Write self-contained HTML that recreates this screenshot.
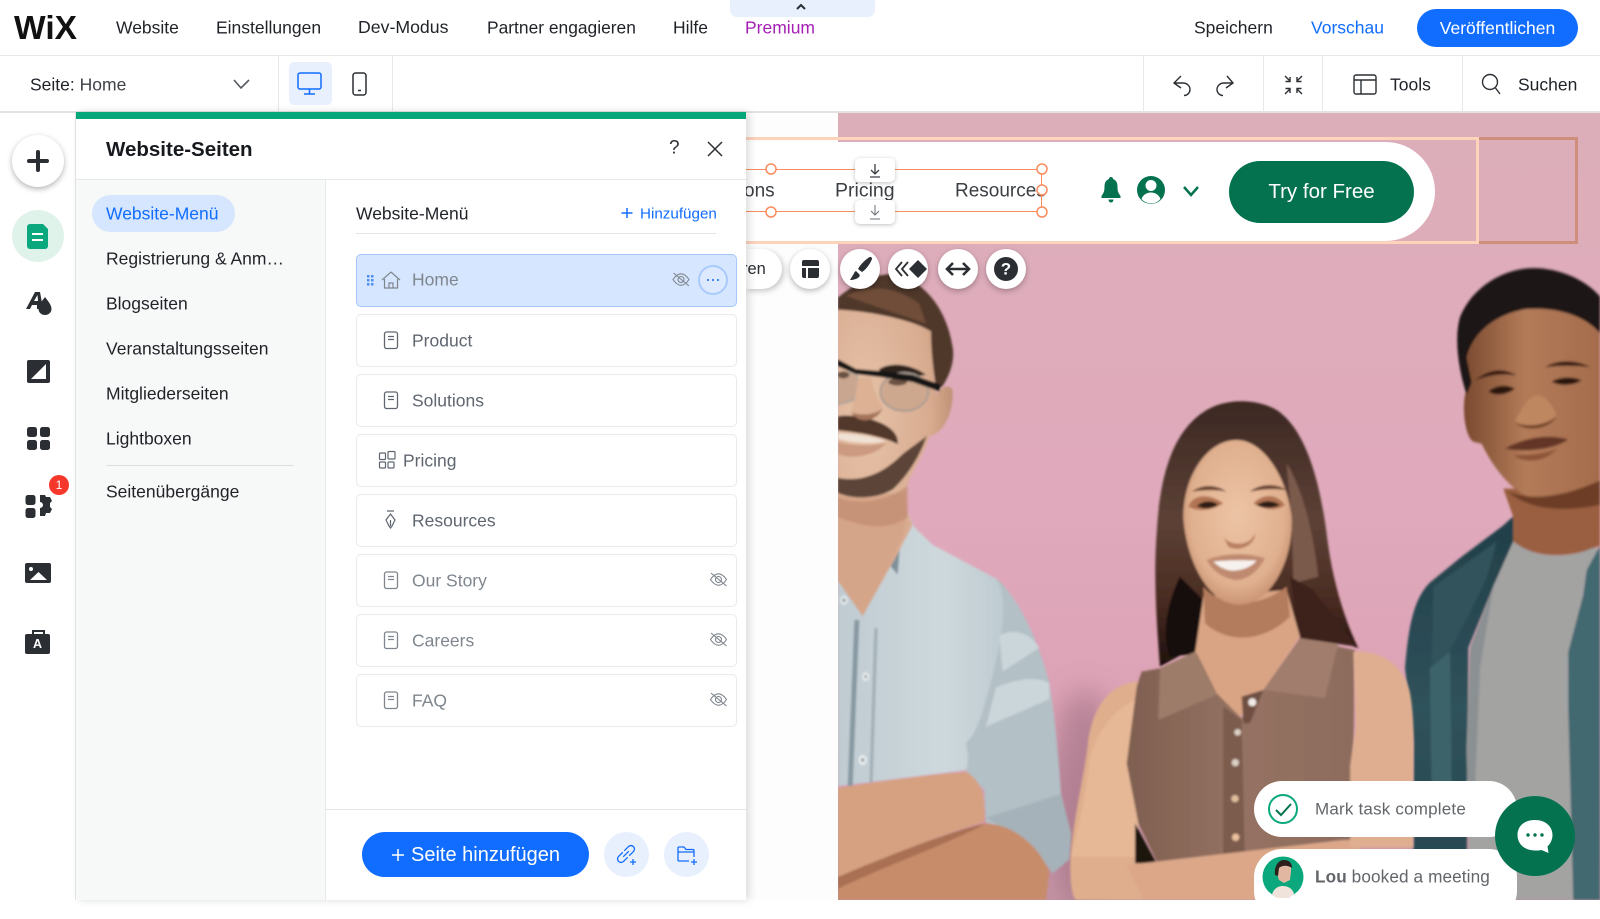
<!DOCTYPE html>
<html lang="de"><head><meta charset="utf-8"><title>Wix Editor</title>
<style>
*{box-sizing:border-box}
html,body{margin:0;padding:0;width:1600px;height:900px;overflow:hidden;background:#fff;font-family:"Liberation Sans",sans-serif;color:#1f2328}
.a{position:absolute;white-space:nowrap}
.t{position:absolute;white-space:nowrap;transform:translateY(-50%);line-height:1}
svg{position:absolute;overflow:visible}
.row{position:absolute;left:356px;width:381px;height:53px;border:1px solid #e8eaec;border-radius:5px;background:#fff}
.rt{position:absolute;white-space:nowrap;font-size:17.5px;line-height:1;transform:translateY(-50%)}
.fb{position:absolute;width:40px;height:40px;top:249px;border-radius:50%;background:#fff;box-shadow:0 2px 6px rgba(0,0,0,.28)}
</style></head><body>

<!-- canvas -->
<div class="a" style="left:746px;top:113px;width:854px;height:787px;background:#fdfdfd"></div>
<svg style="left:838px;top:113px;overflow:hidden" width="762" height="787" viewBox="838 113 762 787">
<defs>
<linearGradient id="pk" x1="0" y1="0" x2="0" y2="1"><stop offset="0" stop-color="#dcaeb9"/><stop offset=".5" stop-color="#e0aabc"/><stop offset=".8" stop-color="#dca0b4"/><stop offset="1" stop-color="#c392a3"/></linearGradient>
<linearGradient id="hr" x1="0" y1="0" x2="0" y2="1"><stop offset="0" stop-color="#3c2823"/><stop offset=".45" stop-color="#5d4136"/><stop offset=".75" stop-color="#4a2c22"/><stop offset="1" stop-color="#1d0f0d"/></linearGradient>
<linearGradient id="sh" x1="0" y1="0" x2="1" y2="0"><stop offset="0" stop-color="#bfcbd1"/><stop offset=".45" stop-color="#ced9dd"/><stop offset=".75" stop-color="#bcc9cf"/><stop offset="1" stop-color="#aebcc2"/></linearGradient>
<linearGradient id="rf" x1="0" y1="0" x2="1" y2="0"><stop offset="0" stop-color="#7a4a30"/><stop offset=".45" stop-color="#b37b58"/><stop offset="1" stop-color="#a46c4c"/></linearGradient>
<radialGradient id="wf" cx=".5" cy=".45" r=".62"><stop offset="0" stop-color="#ecc4a5"/><stop offset=".7" stop-color="#e0b08f"/><stop offset="1" stop-color="#bd8465"/></radialGradient>
<radialGradient id="mf" cx=".25" cy=".35" r=".8"><stop offset="0" stop-color="#e6c2a8"/><stop offset=".7" stop-color="#d8ab8f"/><stop offset="1" stop-color="#b98c70"/></radialGradient>
<linearGradient id="tp" x1="0" y1="0" x2="1" y2="0"><stop offset="0" stop-color="#7f5f50"/><stop offset=".5" stop-color="#957263"/><stop offset="1" stop-color="#8d6c5d"/></linearGradient>
<linearGradient id="jk" x1="0" y1="0" x2="0" y2="1"><stop offset="0" stop-color="#223f48"/><stop offset=".5" stop-color="#2f525b"/><stop offset="1" stop-color="#26464f"/></linearGradient>
<filter id="b1" x="-5%" y="-5%" width="110%" height="110%"><feGaussianBlur stdDeviation="3"/></filter>
<filter id="b2" x="-30%" y="-30%" width="160%" height="160%"><feGaussianBlur stdDeviation="14"/></filter>
</defs>
<rect x="838" y="113" width="762" height="787" fill="url(#pk)"/>
<ellipse cx="1085" cy="800" rx="35" ry="110" fill="#94697a" opacity=".55" filter="url(#b2)"/>

<!-- right man -->
<g transform="translate(1360,260) scale(.3333,.4082)"><g filter="url(#b1)">
<path d="M135 1000C145 900 160 830 210 790L300 730 430 650 460 628 460 690 400 800 325 950 320 1568H160V1180Z" fill="url(#jk)"/>
<path d="M220 800L410 690 380 780 320 880 240 1000 215 1000Z" fill="#30535c"/>
<path d="M210 1000L270 960 275 1300 215 1300Z" fill="#3e636b"/>
<path d="M430 560H720V700C620 735 520 730 460 690L460 630Z" fill="#9a5f3f"/>
<path d="M460 690C520 730 620 735 700 705L720 710 660 860 625 1000 640 1568H330L320 1200 330 950 400 800Z" fill="#a3a3a2"/>
<path d="M330 950L400 800 360 1000 345 1300 320 1300Z" fill="#8b9092"/>
<path d="M720 700L680 760 670 820 625 960 625 1100 640 1568H720Z" fill="#42686f"/>
<path d="M320 240C340 170 420 130 500 120 600 115 680 140 720 180V540C660 570 570 590 510 580 460 570 400 510 365 450L340 445C310 430 305 340 320 320Z" fill="url(#rf)"/>
<path d="M320 330C300 280 280 200 300 140 340 60 440 20 520 20 600 20 680 50 720 90V180C680 140 600 115 500 120 420 130 340 170 320 240L335 300Z" fill="#1c1513"/>
<path d="M345 295C390 265 430 265 470 282 430 278 390 280 345 295ZM555 262C600 242 650 246 690 262 650 258 600 258 555 262Z" fill="#34190f"/>
<path d="M385 322C410 305 440 305 465 315 440 330 410 335 385 322ZM575 298C600 285 640 285 665 295 640 308 600 310 575 298Z" fill="#2a1710"/>
<path d="M465 395C500 412 560 405 590 380 575 350 550 330 530 330 500 340 480 370 465 395Z" fill="#be8760"/>
<path d="M465 398C500 412 560 405 590 384 570 412 500 425 465 398Z" fill="#6e3f28"/>
<path d="M435 462C490 435 570 425 625 440 580 465 490 472 435 462Z" fill="#643427"/>
<path d="M460 478C500 478 560 475 590 462 560 495 490 500 460 478Z" fill="#8d5437"/>
<path d="M440 565C500 590 600 585 720 540V600C600 620 500 610 440 565Z" fill="#6d3e26"/>
</g></g>

<!-- left man -->
<g transform="translate(836,280) scale(.3333,.3954)"><g filter="url(#b1)">
<path d="M5 760L80 850 160 690 210 580 235 625 290 670 480 755C560 810 620 950 640 1020 660 1120 670 1230 675 1300L705 1400 700 1465 650 1500 590 1430 450 1370 445 1290 390 1240 5 1280Z" fill="url(#sh)"/>
<path d="M480 755C520 800 500 900 470 1000 440 1100 420 1150 390 1170 400 1210 395 1230 390 1240L445 1290 450 1370 590 1430 650 1500 700 1465 705 1400 675 1300 660 1200 640 1020C620 950 560 810 480 755Z" fill="#b3c0c6"/>
<path d="M450 1360L675 1300 705 1400 700 1465 650 1500 590 1430Z" fill="#a5b2b9"/>
<path d="M490 900C530 880 580 890 610 930L500 990ZM480 1030C540 1010 600 1000 640 1020L640 1060 450 1130Z" fill="#cbd6da"/>
<path d="M160 670L195 640 185 745 155 715Z" fill="#7f919a"/>
<path d="M70 860L50 1280H35L55 860Z" fill="#8798a1"/><path d="M125 880L110 1270H100L115 880Z" fill="#a1afb6"/>
<path d="M5 70C100 80 230 100 285 130 285 180 295 240 300 290L320 272Q352 262 350 290C350 340 320 390 280 395 260 450 220 490 210 530V580L230 620 180 700 80 850 5 760Z" fill="url(#mf)"/>
<path d="M5 540H205L215 590 205 640 150 740 80 850 5 760Z" fill="#d5a589"/>
<path d="M5 550C70 570 150 560 215 520L215 600C150 640 70 620 5 600Z" fill="#c08c70" opacity=".7"/>
<path d="M5 45C40 20 100 -15 170 -15 250 -5 330 60 350 170 358 210 335 250 318 270L300 270C290 220 285 170 285 130 240 105 120 80 5 75Z" fill="#50372a"/>
<path d="M30 40C90 15 170 10 250 60L270 110 130 70Z" fill="#6f4d38"/>
<path d="M5 500C60 510 130 500 200 440 240 415 265 400 272 395 250 450 210 500 170 530 120 555 50 555 5 538Z" fill="#5b4439"/>
<path d="M5 345C40 340 90 345 130 360 160 370 190 390 185 415 160 405 120 390 5 380Z" fill="#513729"/>
<path d="M5 410C50 420 110 420 150 412 120 445 50 455 5 440Z" fill="#cb9a80"/>
<path d="M5 388C50 388 110 395 150 408 110 415 50 412 5 402Z" fill="#f0e2d4"/>
<path d="M130 225C170 205 230 215 270 240L230 245 130 238Z" fill="#2e221c"/>
<ellipse cx="205" cy="283" rx="72" ry="48" fill="#cda88f" stroke="#a89b92" stroke-width="5"/>
<path d="M5 235H60L70 270 50 305 5 315Z" fill="#c9a68f" stroke="#b2a69c" stroke-width="5"/>
<ellipse cx="185" cy="258" rx="28" ry="9" fill="#6b5142"/><ellipse cx="22" cy="240" rx="18" ry="9" fill="#6b5142"/>
<path d="M5 200L60 225 130 230 230 240 315 265 310 282 230 258 130 245 60 238 5 218Z" fill="#191614"/>
<path d="M65 250C60 290 50 320 45 335 80 345 120 340 140 325 125 300 110 270 105 245Z" fill="#dcb194"/>
<path d="M45 335C80 345 120 340 140 325 120 360 70 365 45 335Z" fill="#a5735a"/>
<path d="M5 1285C120 1270 280 1250 390 1245 430 1260 450 1300 445 1370 380 1385 200 1440 5 1510Z" fill="#d6a181"/>
<path d="M5 1510C200 1440 380 1385 450 1375 520 1375 600 1420 640 1495L630 1568H5Z" fill="#c78c6b"/>
<path d="M5 1510C200 1440 380 1385 450 1375 300 1440 150 1480 5 1540Z" fill="#a96f52"/>
<circle cx="24" cy="810" r="12" fill="#dfe6e9"/><circle cx="24" cy="810" r="4" fill="#66757d"/>
<circle cx="89" cy="1003" r="11" fill="#e4eaec"/><circle cx="89" cy="1003" r="3" fill="#222"/>
<circle cx="80" cy="1214" r="13" fill="#e4eaec"/><circle cx="80" cy="1214" r="3.500" fill="#222"/>
</g></g>

<!-- woman -->
<g transform="translate(1060,390) scale(.3333)"><g filter="url(#b1)">
<path d="M300 830C290 700 280 560 290 430 300 250 340 120 440 60 500 25 590 25 650 60 740 120 780 280 800 430 815 560 850 680 895 775L830 750 700 740 410 770Z" fill="url(#hr)"/>
<path d="M680 220C730 300 760 430 775 560L700 580 695 380Z" fill="#7a5a4c"/>
<path d="M360 560L440 640 430 790 330 800C300 720 330 620 360 560Z" fill="#170c0b"/>
<path d="M690 560L760 600 890 770 720 745Z" fill="#3d211a"/>
<path d="M235 875C150 880 100 950 85 1050 75 1150 40 1280 32 1400 28 1460 35 1530 50 1530H600V1430L250 1420 200 1120Z" fill="#dfae8d"/>
<path d="M32 1400C60 1300 80 1200 90 1100 120 1000 180 950 235 925L205 1120 235 1300 230 1400Z" fill="#e6b896"/>
<path d="M225 1300L290 1420 225 1420Z" fill="#1d1310"/>
<path d="M430 620L680 600 720 740 610 900 540 980 470 920 405 790Z" fill="#d9a484"/>
<path d="M430 590C480 650 590 660 680 590L690 680C610 760 500 760 435 700Z" fill="#b37c5d"/>
<path d="M245 845L300 835 410 790 470 910 545 985 610 900 720 745 835 770 885 780 880 1140 885 1340 840 1370 290 1415 235 1300 200 1120 230 890Z" fill="url(#tp)"/>
<path d="M300 835L405 785 470 915 295 990Z" fill="#9d7b6b"/>
<path d="M720 745L835 762 795 925 610 900Z" fill="#a07d6c"/>
<path d="M490 950L545 990 555 1420H490Z" fill="#7b5b4d"/>
<path d="M545 920L610 900 570 1000 550 1000Z" fill="#6f5043"/>
<path d="M370 380C370 260 440 150 530 150 610 150 680 260 695 380 700 480 660 590 590 630 550 650 510 650 470 620 410 570 375 470 370 380Z" fill="url(#wf)"/>
<path d="M385 350C400 310 450 310 490 340 450 365 410 365 385 350ZM580 340C610 310 650 310 675 345 650 365 610 360 580 340Z" fill="#b17553"/>
<path d="M395 305C430 280 470 285 500 305 470 298 430 300 395 305ZM570 305C600 280 650 280 680 300 640 295 605 298 570 305Z" fill="#6a4433"/>
<path d="M410 348C430 330 460 330 475 345 450 358 430 358 410 348ZM590 345C610 330 640 330 660 345 640 356 610 356 590 345Z" fill="#2f1c18"/>
<path d="M490 440C510 470 570 470 585 430 590 460 540 490 505 470Z" fill="#b98060"/>
<path d="M440 510C490 488 570 488 615 505 590 550 560 570 525 570 490 565 460 545 440 510Z" fill="#c08a70"/>
<path d="M460 515C500 510 560 510 590 512 570 535 540 542 515 542 495 540 475 530 460 515Z" fill="#f7f2ee"/>
<g fill="#ddd0c4"><circle cx="577" cy="937" r="12" fill="#f3ece6"/><circle cx="533" cy="1027" r="10"/><circle cx="526" cy="1118" r="11"/><circle cx="525" cy="1226" r="11" fill="#e0bd9d"/><circle cx="527" cy="1342" r="11" fill="#ecc29f"/></g>
<path d="M290 1415L850 1350 900 1350 900 1530H250L200 1425Z" fill="#dca789"/>
</g></g>
<!-- woman right shoulder -->
<g transform="translate(1360,260) scale(.3333,.4082)"><g filter="url(#b1)">
<path d="M-20 960C60 955 130 990 150 1060 165 1130 160 1200 160 1280V1440H-30L-30 1240-12 1140Z" fill="#dfae90"/>
</g></g>
</svg>

<!-- Selection frame / website header -->
<div class="a" style="left:746px;top:142px;width:689px;height:99px;background:#fff;border-radius:0 50px 50px 0"></div>
<div class="a" style="left:746px;top:137px;width:733px;height:107px;border:3px solid #fdd3ba;border-left:none"></div>
<div class="a" style="left:1479px;top:137px;width:99px;height:107px;border:3px solid #cf8d7b;border-left:none"></div>
<div class="t" style="left:744px;top:191px;font-size:19px;color:#3b3f44">ons</div>
<div class="t" style="left:835px;top:191px;font-size:19.500px;color:#3b3f44">Pricing</div>
<div class="t" style="left:955px;top:191px;font-size:19px;color:#3b3f44">Resources</div>
<div class="a" style="left:746px;top:169px;width:296px;height:43px;border-top:1.500px solid #fb8c5d;border-bottom:1.500px solid #fb8c5d;border-right:1.500px solid #fb8c5d"></div>
<svg style="left:0;top:0" width="1600" height="900">
<g fill="#fff" stroke="#fb8c5d" stroke-width="1.500"><circle cx="771" cy="169" r="5"/><circle cx="771" cy="212" r="5"/><circle cx="1042" cy="169" r="5"/><circle cx="1042" cy="190" r="5"/><circle cx="1042" cy="212" r="5"/></g>
</svg>
<div class="a" style="left:855px;top:158px;width:40px;height:24px;border-radius:5px;background:#fff;box-shadow:0 1px 4px rgba(0,0,0,.25)"></div>
<div class="a" style="left:855px;top:200px;width:40px;height:24px;border-radius:5px;background:#fff;box-shadow:0 1px 4px rgba(0,0,0,.25)"></div>
<svg style="left:0;top:0" width="1600" height="900">
<path d="M875 164V174M871 170L875 174 879 170M870 177H880" fill="none" stroke="#3b3f44" stroke-width="1.300"/>
<path d="M875 205V215M871 211L875 215 879 211M870 219H880" fill="none" stroke="#6b7076" stroke-width="1"/>
<path d="M1111 177c1.500 0 2 1 2 2 4 1.500 4.500 5 4.500 8 0 4 .8 6 3 9v2h-19v-2c2.200-3 3-5 3-9 0-3 .5-6.500 4.500-8 0-1 .5-2 2-2zM1108.500 199.500h5c0 1.500-1 3-2.500 3s-2.500-1.500-2.500-3z" fill="#04724f"/>
<circle cx="1151" cy="190" r="14" fill="#04724f"/>
<circle cx="1151" cy="185.500" r="5.500" fill="#fff"/><path d="M1141.500 199c2-5 6-6.500 9.500-6.500s7.500 1.500 9.500 6.500c-2.500 3-6 4.500-9.500 4.500s-7-1.500-9.500-4.500z" fill="#fff"/>
<path d="M1184 187L1191 195 1198 187" fill="none" stroke="#04724f" stroke-width="2.500"/>
</svg>
<div class="a" style="left:1229px;top:161px;width:185px;height:62px;border-radius:31px;background:#04724f;color:#fff;font-size:20.500px;line-height:62px;text-align:center">Try for Free</div>

<!-- Floating tools -->
<div class="a" style="left:746px;top:249px;width:36px;height:40px;background:#fff;border-radius:0 20px 20px 0;box-shadow:2px 2px 6px rgba(0,0,0,.22);font-size:16.500px;line-height:40px;color:#2b2f33;overflow:hidden"><span style="position:absolute;left:-4px">ren</span></div>
<div class="fb" style="left:790px"></div><div class="fb" style="left:840px"></div><div class="fb" style="left:888px"></div><div class="fb" style="left:938px"></div><div class="fb" style="left:986px"></div>
<svg style="left:0;top:0" width="1600" height="900">
<path d="M802 262a2 2 0 0 1 2-2h13a2 2 0 0 1 2 2v4h-17zM802 268h4v10h-2a2 2 0 0 1-2-2zM808 268h11v8a2 2 0 0 1-2 2h-9z" fill="#2b2f33"/>
<path d="M870 257c-1 0-8 5-12 12l4 3c5-3 9-10 10-13 0-2-1-2-2-2zM856 271c-2 1-2 3-3 4l-3 5c3 0 7-1 9-3 1-1 1-2 0-3z" fill="#2b2f33"/>
<path d="M908 262L902 269 908 276M902 262L896 269 902 276" fill="none" stroke="#2b2f33" stroke-width="1.800"/>
<path d="M918 260L927 269 918 278 909 269z" fill="#2b2f33"/>
<path d="M948 269H968M953 263L947 269 953 275M963 263L969 269 963 275" fill="none" stroke="#2b2f33" stroke-width="2.600"/>
<circle cx="1006" cy="269" r="12" fill="#2b2f33"/>
</svg>
<div class="t" style="left:1006px;top:269px;font-size:17px;font-weight:700;color:#fff;transform:translate(-50%,-50%)">?</div>

<!-- Chat -->
<div class="a" style="left:1254px;top:781px;width:263px;height:56px;border-radius:28px;background:#fff"></div>
<div class="a" style="left:1254px;top:849px;width:263px;height:70px;border-radius:28px;background:#fff"></div>
<div class="t" style="left:1315px;top:809px;font-size:17px;color:#62666a;letter-spacing:.2px">Mark task complete</div>
<div class="t" style="left:1315px;top:877px;font-size:17.200px;color:#62666a;letter-spacing:.1px"><b>Lou</b> booked a meeting</div>
<svg style="left:0;top:0" width="1600" height="900">
<circle cx="1283" cy="809" r="14" fill="none" stroke="#0aa87c" stroke-width="2"/>
<path d="M1276 810L1281 815 1291 804" fill="none" stroke="#04724f" stroke-width="2"/>
<circle cx="1283" cy="877" r="20.500" fill="#0aa87c"/>
<path d="M1276 870c0-6 4-9 8-9s8 3 7 10l-1 9-6 3-5-3z" fill="#e2b7a1"/><path d="M1275 875c-1-10 4-15 9-15s8 3 8 8c-4-3-10-3-13 0l-1 8z" fill="#2c1f1c"/>
<path d="M1272 895c1-6 6-9 11-9s10 3 11 8l-5 4h-12z" fill="#efe3dc"/>
<circle cx="1535" cy="836" r="40" fill="#04724f"/>
<path d="M1535 820c10.500 0 17.500 6.500 17.500 15 0 5-2.500 9-5 11.500l1 6.500-7-3c-2 .5-4 .5-6.500.5-10.500 0-17.500-6.500-17.500-15.500s7-15 17.500-15z" fill="#fff"/>
<g fill="#04724f"><circle cx="1528" cy="835" r="1.700"/><circle cx="1535" cy="835" r="1.700"/><circle cx="1542" cy="835" r="1.700"/></g>
</svg>

<!-- Top bar -->
<div class="a" style="left:0;top:0;width:1600px;height:56px;background:#fff;border-bottom:1.500px solid #e7e8e9"></div>
<div class="a" style="left:730px;top:0;width:145px;height:17px;background:#e8f0fe;border-radius:0 0 7px 7px"></div>
<svg style="left:0;top:0" width="1600" height="60"><path d="M797 9L801 5 805 9" fill="none" stroke="#2b2f33" stroke-width="2"/>
<text x="14" y="39" font-family="Liberation Sans" font-weight="700" font-size="33" fill="#111" textLength="63" lengthAdjust="spacingAndGlyphs">WiX</text></svg>
<div class="t" style="left:116px;top:28px;font-size:17.500px">Website</div>
<div class="t" style="left:216px;top:28px;font-size:17.500px">Einstellungen</div>
<div class="t" style="left:358px;top:28px;font-size:17.700px">Dev-Modus</div>
<div class="t" style="left:487px;top:28px;font-size:17.400px">Partner engagieren</div>
<div class="t" style="left:673px;top:28px;font-size:17.500px">Hilfe</div>
<div class="t" style="left:745px;top:28px;font-size:17.500px;color:#a51fb5">Premium</div>
<div class="t" style="left:1194px;top:28px;font-size:17.500px">Speichern</div>
<div class="t" style="left:1311px;top:28px;font-size:17.500px;color:#116dff">Vorschau</div>
<div class="a" style="left:1417px;top:9px;width:161px;height:38px;border-radius:19px;background:#116dff;color:#fff;font-size:17.500px;line-height:38px;text-align:center">Veröffentlichen</div>

<!-- Second bar -->
<div class="a" style="left:0;top:56px;width:1600px;height:57px;background:#fff;border-bottom:2px solid #e3e2de"></div>
<div class="t" style="left:30px;top:85px;font-size:17.500px">Seite: <span style="color:#3d4147">Home</span></div>
<svg style="left:0;top:0" width="1600" height="115">
<path d="M234 80L241 88 249 80" fill="none" stroke="#55595e" stroke-width="1.600"/>
<g stroke="#e7e8e9" stroke-width="1"><path d="M278.500 56V112M392.500 56V112M1143.500 56V112M1263.500 56V112M1322.500 56V112M1462.500 56V112"/></g>
<rect x="289" y="62" width="43" height="43" rx="5" fill="#e8f0fe"/>
<rect x="298" y="73" width="23" height="16" rx="2" fill="none" stroke="#116dff" stroke-width="1.500"/><path d="M309.500 89V94M304 94H315" stroke="#116dff" stroke-width="1.500"/>
<rect x="353" y="73" width="13" height="22" rx="2.500" fill="none" stroke="#2b2f33" stroke-width="1.500"/><path d="M358 90.500H361" stroke="#2b2f33" stroke-width="1.500"/>
<g fill="none" stroke="#2b2f33" stroke-width="1.400">
<path d="M1181 76L1174 83 1181 88M1174 83H1183a7 6.500 0 0 1 7 6.500 6 6 0 0 1-6 6"/>
<path d="M1227 76L1233 83 1226 88M1233 83H1224a7 6.500 0 0 0-7 6.500 6 6 0 0 0 6 6"/>
<path d="M1285 76L1290 81M1290 77V81.500H1285.500M1302 76L1297 81M1297 77V81.500H1301.500M1285 94L1290 89M1290 93V88.500H1285.500M1302 94L1297 89M1297 93V88.500H1301.500"/>
<rect x="1354" y="75" width="22" height="19" rx="2"/><path d="M1354 80H1376M1361 80V94"/>
<circle cx="1490" cy="82" r="7.500"/><path d="M1495.500 88L1500 94"/>
</g></svg>
<div class="t" style="left:1390px;top:85px;font-size:17.500px">Tools</div>
<div class="t" style="left:1518px;top:85px;font-size:17.500px">Suchen</div>

<!-- Sidebar -->
<div class="a" style="left:0;top:113px;width:76px;height:787px;background:#fff;border-right:1px solid #e7e8e9"></div>
<div class="a" style="left:12px;top:135px;width:52px;height:52px;border-radius:50%;background:#fff;box-shadow:0 2px 6px rgba(0,0,0,.3)"></div>
<div class="a" style="left:12px;top:210px;width:52px;height:52px;border-radius:50%;background:#dff3ea"></div>
<svg style="left:0;top:0" width="80" height="700">
<path d="M38 152V170M29 161H47" stroke="#2b2f33" stroke-width="4" stroke-linecap="round"/>
<path d="M30 224h13l5 5v17a3 3 0 0 1-3 3H30a3 3 0 0 1-3-3v-19a3 3 0 0 1 3-3z" fill="#0aa87c"/><path d="M32 234H43M32 240H43" stroke="#fff" stroke-width="2"/>
<path d="M26 309L35 292H40L42 303 40 309H37V305H32L30 309ZM34 301H38L37.500 295Z" fill="#2b2f33" fill-rule="evenodd"/>
<path d="M45 297c3 4 6.500 8 6.500 12a6.500 6 0 0 1-13 0c0-4 3.500-8 6.500-12z" fill="#2b2f33"/>
<rect x="27" y="360" width="23" height="23" rx="2" fill="#2b2f33"/><path d="M31 379L46 364V379z" fill="#fff"/>
<g fill="#2b2f33"><rect x="27" y="427" width="10" height="10" rx="2.500"/><rect x="40" y="427" width="10" height="10" rx="2.500"/><rect x="27" y="440" width="10" height="10" rx="2.500"/><rect x="40" y="440" width="10" height="10" rx="2.500"/>
<rect x="25.500" y="495" width="10" height="10" rx="2.500"/><rect x="25.500" y="508" width="10" height="10" rx="2.500"/>
<path d="M40 495h5l1 2 4 0 2 4-2 2v4l2 2-2 4-4 0-1 3-5 0v-8a3 3 0 0 0 0-6z"/></g>
<rect x="25" y="563" width="26" height="20" rx="2" fill="#2b2f33"/><path d="M30 580L38.500 572 47 580z" fill="#fff"/><circle cx="31" cy="569" r="2" fill="#fff"/>
<path d="M33 634v-3h11v3" fill="none" stroke="#2b2f33" stroke-width="2"/><rect x="25" y="634" width="25" height="20" rx="2" fill="#2b2f33"/>
<circle cx="59" cy="485" r="10" fill="#f6372c"/></svg>
<div class="t" style="left:59px;top:485px;font-size:12px;color:#fff;transform:translate(-50%,-50%)">1</div>
<div class="t" style="left:37.500px;top:644px;font-size:12.500px;font-weight:700;color:#fff;transform:translate(-50%,-50%)">A</div>

<!-- Panel -->
<div class="a" style="left:76px;top:112px;width:670px;height:788px;background:#fff;box-shadow:3px 0 8px rgba(0,0,0,.14)"></div>
<div class="a" style="left:76px;top:112px;width:670px;height:7px;background:#04a77a"></div>
<div class="t" style="left:106px;top:150px;font-size:20.500px;font-weight:700;color:#161a1e">Website-Seiten</div>
<div class="t" style="left:669px;top:148px;font-size:19px;color:#2b2f33">?</div>
<svg style="left:0;top:0" width="760" height="900">
<path d="M708 142L722 156M722 142L708 156" stroke="#2b2f33" stroke-width="1.500"/>
</svg>
<div class="a" style="left:76px;top:179px;width:670px;height:1px;background:#e7e8e9"></div>
<div class="a" style="left:76px;top:180px;width:250px;height:720px;background:#f7f8f8;border-right:1px solid #e7e8e9"></div>
<div class="a" style="left:92px;top:195px;width:143px;height:37px;border-radius:18.500px;background:#d6e6fe"></div>
<div class="t" style="left:106px;top:214px;font-size:17.500px;color:#116dff">Website-Menü</div>
<div class="t" style="left:106px;top:259px;font-size:17.500px">Registrierung &amp; Anm…</div>
<div class="t" style="left:106px;top:304px;font-size:17.500px">Blogseiten</div>
<div class="t" style="left:106px;top:349px;font-size:17.500px">Veranstaltungsseiten</div>
<div class="t" style="left:106px;top:394px;font-size:17.500px">Mitgliederseiten</div>
<div class="t" style="left:106px;top:439px;font-size:17.500px">Lightboxen</div>
<div class="a" style="left:106px;top:465px;width:188px;height:1px;background:#dcdee0"></div>
<div class="t" style="left:106px;top:492px;font-size:17.500px">Seitenübergänge</div>

<div class="t" style="left:356px;top:214px;font-size:17.500px">Website-Menü</div>
<div class="t" style="left:640px;top:214px;font-size:15.200px;color:#116dff">Hinzufügen</div>
<div class="a" style="left:356px;top:233px;width:360px;height:1px;background:#e3e5e7"></div>

<div class="row" style="top:254px;background:#d6e6fe;border-color:#a4c8fb"></div>
<div class="row" style="top:314px"></div><div class="row" style="top:374px"></div><div class="row" style="top:434px"></div><div class="row" style="top:494px"></div><div class="row" style="top:554px"></div><div class="row" style="top:614px"></div><div class="row" style="top:674px"></div>
<div class="rt" style="left:412px;top:280px;color:#7f868e">Home</div>
<div class="rt" style="left:412px;top:341px;color:#5f6670">Product</div>
<div class="rt" style="left:412px;top:401px;color:#5f6670">Solutions</div>
<div class="rt" style="left:403px;top:461px;color:#5f6670">Pricing</div>
<div class="rt" style="left:412px;top:521px;color:#5f6670">Resources</div>
<div class="rt" style="left:412px;top:581px;color:#7f868e">Our Story</div>
<div class="rt" style="left:412px;top:641px;color:#7f868e">Careers</div>
<div class="rt" style="left:412px;top:701px;color:#7f868e">FAQ</div>

<svg style="left:0;top:0" width="760" height="900">
<defs>
<g id="doc" fill="none" stroke-width="1.300"><rect x="0" y="0" width="13" height="16.500" rx="2"/><path d="M3.500 4.500H9.500M3.500 7.500H9.500"/></g>
<g id="eye" fill="none" stroke="#7f868e" stroke-width="1.100"><path d="M0 6.500C3 2 6 .8 8 .8s5 1.200 8 5.700c-3 4.500-6 5.700-8 5.700S3 11 0 6.500z"/><circle cx="8" cy="6.500" r="3"/><path d="M.5 0L16 13"/></g>
</defs>
<path d="M627 208V218M621.500 213H632.500" stroke="#116dff" stroke-width="1.500"/>
<g fill="#4f8ef5"><rect x="367" y="275" width="2.500" height="2.500"/><rect x="371" y="275" width="2.500" height="2.500"/><rect x="367" y="279" width="2.500" height="2.500"/><rect x="371" y="279" width="2.500" height="2.500"/><rect x="367" y="283" width="2.500" height="2.500"/><rect x="371" y="283" width="2.500" height="2.500"/></g>
<path d="M382 280L391 272 400 280M384.500 279V288H397.500V279M389 288V283H393V288" fill="none" stroke="#7f868e" stroke-width="1.200"/>
<use href="#doc" x="384.500" y="332" stroke="#5f6670"/><use href="#doc" x="384.500" y="392" stroke="#5f6670"/>
<g fill="none" stroke="#5f6670" stroke-width="1.200"><rect x="379.500" y="453" width="6" height="6.500" rx="1"/><rect x="388" y="452" width="7" height="7.500" rx="1" transform="translate(0,-.5)"/><rect x="379.500" y="462" width="6" height="6" rx="1"/><rect x="388" y="462" width="6" height="6" rx="1"/>
<path d="M387 511H394M390.500 514l-4.500 6 3 6 1.500 2 1.500-2 3-6zM390.500 520V526"/></g>
<use href="#doc" x="384.500" y="572" stroke="#7f868e"/><use href="#doc" x="384.500" y="632" stroke="#7f868e"/><use href="#doc" x="384.500" y="692" stroke="#7f868e"/>
<use href="#eye" x="673" y="273"/><use href="#eye" x="710.500" y="573"/><use href="#eye" x="710.500" y="633"/><use href="#eye" x="710.500" y="693"/>
<circle cx="713" cy="280" r="14" fill="#dce9fe" stroke="#a9cbfb" stroke-width="2"/><g fill="#116dff"><circle cx="708" cy="280" r="1"/><circle cx="713" cy="280" r="1"/><circle cx="718" cy="280" r="1"/></g>
</svg>

<div class="a" style="left:326px;top:809px;width:420px;height:1px;background:#e3e5e7"></div>
<div class="a" style="left:362px;top:832px;width:227px;height:45px;border-radius:22.500px;background:#116dff"></div>
<div class="t" style="left:411px;top:855px;font-size:20px;color:#fff">Seite hinzufügen</div>
<div class="a" style="left:604px;top:832px;width:45px;height:45px;border-radius:50%;background:#e8f0fe"></div>
<div class="a" style="left:664px;top:832px;width:45px;height:45px;border-radius:50%;background:#e8f0fe"></div>
<svg style="left:0;top:0" width="760" height="900">
<path d="M398 849V861M392 855H404" stroke="#fff" stroke-width="1.500"/>
<g fill="none" stroke="#116dff" stroke-width="1.300">
<g transform="rotate(-45 626 854)"><path d="M625 850.500h-6a3.500 3.500 0 0 0 0 7h6M627 850.500h6a3.500 3.500 0 0 1 0 7h-6M622 854h8"/></g>
<path d="M630 862H636M633 859V865"/>
<path d="M678 848a1 1 0 0 1 1-1h5l2 2.500h7a1 1 0 0 1 1 1V857M678 852H694M678 848v12a1 1 0 0 0 1 1h10"/>
<path d="M691 862H697M694 859V865"/>
</g></svg>
</body></html>
